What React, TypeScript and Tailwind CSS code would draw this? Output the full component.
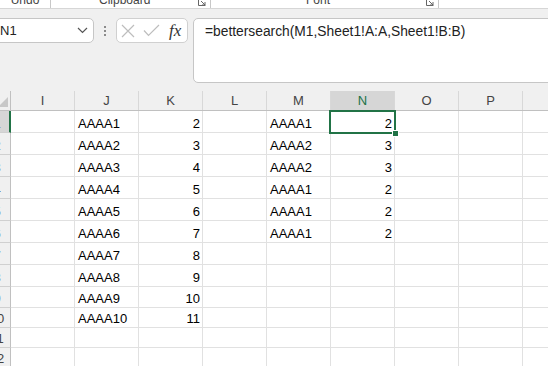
import React from "react";

const cols = ["I", "J", "K", "L", "M", "N", "O", "P", "Q"];

const rowHeights = [22, 22, 22, 22, 22, 22, 22, 22, 21, 20, 20, 20];

const colJ = ["AAAA1", "AAAA2", "AAAA3", "AAAA4", "AAAA5", "AAAA6", "AAAA7", "AAAA8", "AAAA9", "AAAA10"];
const colK = ["2", "3", "4", "5", "6", "7", "8", "9", "10", "11"];
const colM = ["AAAA1", "AAAA2", "AAAA2", "AAAA1", "AAAA1", "AAAA1"];
const colN = ["2", "3", "3", "2", "2", "2"];

const heightClass = (h: number) =>
  h === 22 ? "h-[22px]" : h === 21 ? "h-[21px]" : "h-[20px]";

const Launcher = () => (
  <svg width="8" height="8" viewBox="0 0 8 8" className="-mt-[2px]">
    <path d="M0.5 0.5 V7.5 H7.5" fill="none" stroke="#666" strokeWidth="1" />
    <path d="M3 3 L7 7 M4 7 H7 V4" fill="none" stroke="#666" strokeWidth="1" />
  </svg>
);

const Ribbon = () => (
  <div className="flex h-[9px] bg-white border-b border-[#d6d6d6] overflow-hidden text-[12px] leading-[12px] text-[#444]">
    <div className="w-[51px] shrink-0 border-r border-[#c8c8c8] flex justify-center">
      <span className="-mt-[6px]">Undo</span>
    </div>
    <div className="w-[160px] shrink-0 border-r border-[#c8c8c8] flex pl-[48px] pr-[4px]">
      <span className="-mt-[6px]">Clipboard</span>
      <div className="flex-1" />
      <Launcher />
    </div>
    <div className="w-[228px] shrink-0 border-r border-[#c8c8c8] flex pl-[95px] pr-[4px]">
      <span className="-mt-[6px]">Font</span>
      <div className="flex-1" />
      <Launcher />
    </div>
    <div className="flex-1" />
  </div>
);

const FormulaBar = () => (
  <div className="h-[82px] bg-[#f0f0f0] pt-[9px] flex items-start">
    <div className="-ml-[6px] w-[100px] h-[25px] shrink-0 bg-white border border-[#c6c6c6] rounded-[5px] flex items-center pl-[5px] pr-[5px] text-[13px] text-[#222]">
      <span>N1</span>
      <div className="flex-1" />
      <svg width="11" height="7" viewBox="0 0 11 7">
        <path d="M1 1 L5.5 5.5 L10 1" fill="none" stroke="#555" strokeWidth="1.2" />
      </svg>
    </div>
    <div className="w-[22px] h-[25px] shrink-0 flex flex-col items-center justify-center gap-[2px]">
      <span className="w-[2px] h-[2px] bg-[#8a8a8a]" />
      <span className="w-[2px] h-[2px] bg-[#8a8a8a]" />
      <span className="w-[2px] h-[2px] bg-[#8a8a8a]" />
    </div>
    <div className="w-[72px] h-[25px] shrink-0 bg-white border border-[#d0d0d0] rounded-[5px] flex items-center pl-[4px]">
      <svg width="14" height="14" viewBox="0 0 14 14">
        <path d="M1 1 L13 13 M13 1 L1 13" stroke="#bdbdbd" strokeWidth="1.2" />
      </svg>
      <svg width="17" height="13" viewBox="0 0 17 13" className="ml-[8px]">
        <path d="M1 6.5 L5.5 11.5 L16 1" fill="none" stroke="#bdbdbd" strokeWidth="1.2" />
      </svg>
      <span className="ml-[9px] text-[17px] leading-[17px] italic text-[#333] font-['Liberation_Serif',serif]">
        fx
      </span>
    </div>
    <div className="ml-[5px] -mr-[20px] flex-1 h-[65px] bg-white border border-[#c6c6c6] rounded-[5px] pl-[11px] pt-[5px] text-[13.8px] leading-[16px] text-[#222]">
      =bettersearch(M1,Sheet1!A:A,Sheet1!B:B)
    </div>
  </div>
);

const HeaderRow = () => (
  <div className="flex h-[20px] bg-[#f0f0f0] border-b border-[#c0c0c0]">
    <div className="w-[11px] shrink-0 border-r border-[#c0c0c0] flex items-end overflow-hidden">
      <svg width="10" height="13" viewBox="0 0 10 13" className="mb-[2px]">
        <path d="M8 2 V12 H-2 Z" fill="#c8c8c8" />
      </svg>
    </div>
    {cols.map((c) => (
      <div
        key={c}
        className={
          "w-[64px] shrink-0 border-r border-[#d8d8d8] flex items-center justify-center text-[13px] " +
          (c === "N" ? "bg-[#d6d6d6] text-[#217346]" : "text-[#444]")
        }
      >
        {c}
      </div>
    ))}
  </div>
);

const cellValue = (r: number, c: string) => {
  if (c === "J") return colJ[r];
  if (c === "K") return colK[r];
  if (c === "M") return colM[r];
  if (c === "N") return colN[r];
  return undefined;
};

const Grid = () => (
  <div className="text-[13px] leading-[16px] text-black">
    <HeaderRow />
    {rowHeights.map((h, r) => (
      <div key={r} className={"flex " + heightClass(h)}>
        <div
          className={
            "w-[11px] shrink-0 overflow-hidden border-b border-[#d0d0d0] " +
            (r === 0
              ? "bg-[#d6d6d6] border-r-2 border-r-[#217346]"
              : "bg-[#f0f0f0] border-r border-r-[#c0c0c0]")
          }
        >
          <div className="w-[28px] -ml-[17px] h-full flex items-end justify-center text-[#444]">
            {r + 1}
          </div>
        </div>
        {cols.map((c) => {
          const v = cellValue(r, c);
          const numeric = c === "K" || c === "N";
          return (
            <div
              key={c}
              className={
                "relative w-[64px] shrink-0 border-r border-b border-[#e1e1e1] flex items-end " +
                (numeric ? "justify-end pr-[2px]" : "pl-[3px]")
              }
            >
              {v}
              {r === 0 && c === "N" && (
                <div className="absolute z-10 -left-[2px] -top-[1px] w-[67px] h-[24px] border-2 border-[#217346]">
                  <div className="absolute -right-[5px] -bottom-[5px] w-[7px] h-[7px] bg-[#217346] border border-white" />
                </div>
              )}
            </div>
          );
        })}
      </div>
    ))}
  </div>
);

export default function App() {
  return (
    <div className="w-[548px] h-[366px] overflow-hidden bg-white font-['Liberation_Sans',Arial,sans-serif]">
      <Ribbon />
      <FormulaBar />
      <Grid />
    </div>
  );
}
